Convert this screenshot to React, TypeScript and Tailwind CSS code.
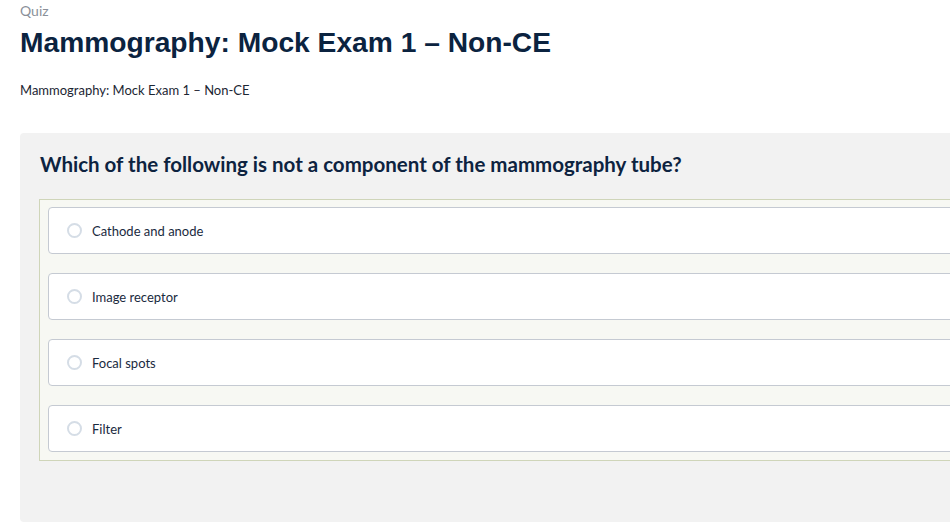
const options = ['Cathode and anode', 'Image receptor', 'Focal spots', 'Filter'];

export default function App() {
  return (
    <div className="w-[950px] h-[532px] overflow-hidden bg-white font-['Lato','Open_Sans',sans-serif]">
      <div className="pl-5">
        <div className="pt-[1px] text-[14px] leading-[20px] text-[#8a9099]">Quiz</div>
        <h1 className="mt-[5px] font-['Liberation_Sans',Arial,sans-serif] text-[28.2px] leading-[32px] font-bold text-[#0b2340]">
          Mammography: Mock Exam 1 – Non-CE
        </h1>
        <p className="mt-[24px] text-[13px] leading-[16px] text-[#1c2633]">Mammography: Mock Exam 1 – Non-CE</p>

        <div className="mt-[35px] w-[1010px] h-[389px] rounded-[4px] bg-[#f2f2f2] pt-[17px] pl-[19px]">
          <h2 className="pl-[1px] text-[20.5px] leading-[28px] font-bold text-[#0d2340]">
            Which of the following is not a component of the mammography tube?
          </h2>
          <div className="mt-[21px] border border-[#cfd5b9] bg-[#f7f8f3] pl-2 pt-[7px] pb-2 flex flex-col gap-[19px]">
            {options.map((o) => (
              <label key={o} className="flex h-[47px] items-center rounded-[4px] border border-[#c5cad2] bg-white pl-[18px]">
                <span className="h-[15px] w-[15px] rounded-full border-2 border-[#d5dde6] bg-white" />
                <span className="ml-[10px] pt-[2px] text-[13px] text-[#1a2a40]">{o}</span>
              </label>
            ))}
          </div>
        </div>
      </div>
    </div>
  );
}
